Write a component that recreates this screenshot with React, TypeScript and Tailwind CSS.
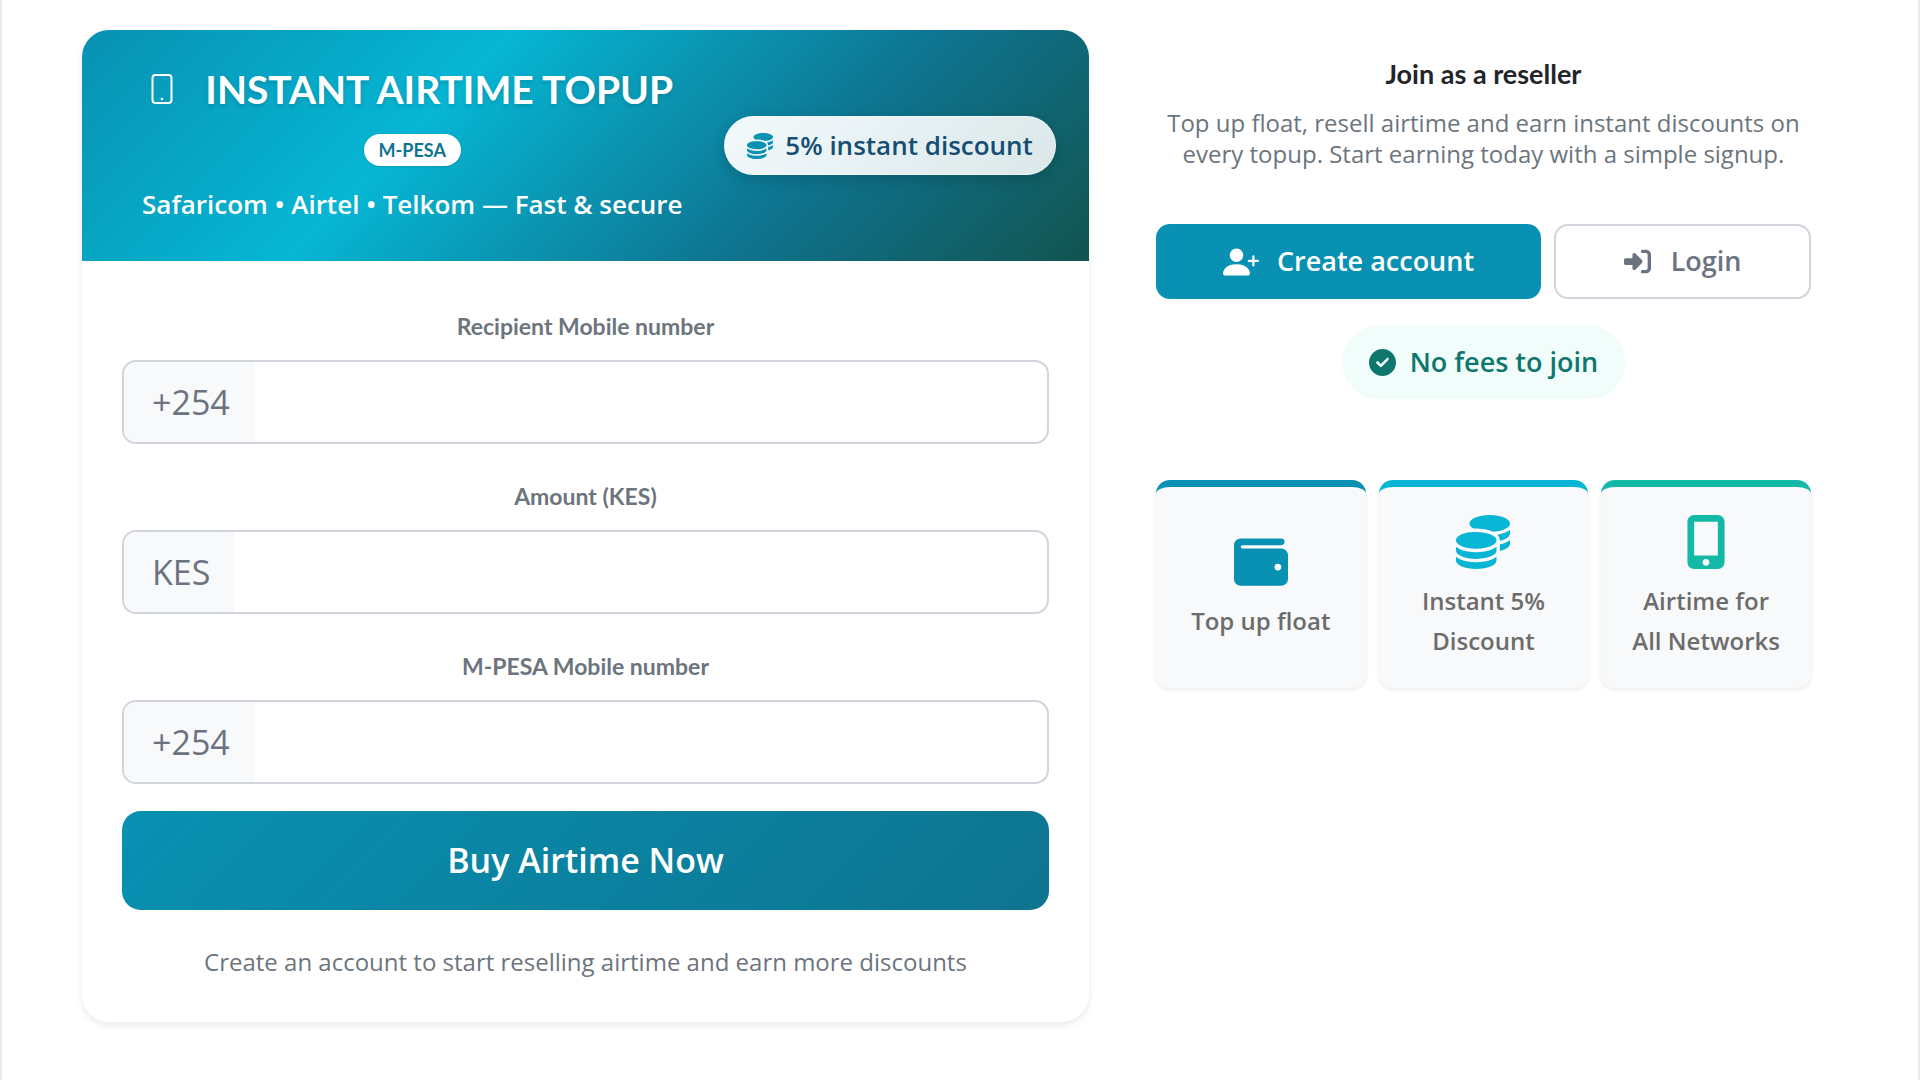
import { useId, type ReactNode } from "react";
import { BsPersonPlusFill } from "react-icons/bs";
import { FaCircleCheck, FaCoins, FaMobileScreenButton, FaRightToBracket, FaWallet } from "react-icons/fa6";

function PhoneOutline() {
  return (
    <svg viewBox="0 0 22 30" className="h-[30px] w-[22px]" fill="none" aria-hidden>
      <rect x="1.5" y="1" width="19" height="28" rx="3" stroke="currentColor" strokeWidth="2" />
      <circle cx="11" cy="25" r="1.3" fill="currentColor" />
    </svg>
  );
}

function Field({ label, prefix }: { label: string; prefix: string }) {
  const id = useId();
  return (
    <div className="flex flex-col">
      <label
        htmlFor={id}
        className="text-center font-['Lato',sans-serif] text-[23px] leading-8 font-bold text-[#6c757d]"
      >
        {label}
      </label>
      <div className="mt-[18px] flex h-[84px] overflow-hidden rounded-[14px] border-2 border-[#d1d5db] bg-white">
        <span className="flex items-center bg-[#f8f9fb] pr-6 pl-7 text-[34px] text-[#6b7280]">{prefix}</span>
        <input id={id} type="tel" className="min-w-0 flex-1 px-6 text-3xl text-gray-800 outline-none" />
      </div>
    </div>
  );
}

function Feature({ icon, className, children }: { icon: ReactNode; className: string; children: ReactNode }) {
  return (
    <li
      className={`flex h-52 flex-col items-center justify-center gap-3 rounded-[14px] border-t-[7px] bg-[#f8f9fb] text-[54px] shadow-[0_2px_4px_rgba(0,0,0,0.08)] ${className}`}
    >
      {icon}
      <span className="text-center text-2xl leading-10 font-semibold text-[#6c6c6c]">{children}</span>
    </li>
  );
}

export default function App() {
  return (
    <main className="min-h-screen border-x-2 border-[#e8e8f0] bg-white px-20 pt-[30px] font-['Open_Sans',sans-serif]">
      <div className="grid grid-cols-[71fr_50fr] items-start gap-10">
        <section className="overflow-hidden rounded-[27px] bg-white shadow-[0_3px_7px_rgba(0,0,0,0.09)]">
          <header className="flex h-[231px] items-center justify-between bg-[linear-gradient(135deg,#0891b2_0%,#06b6d4_35%,#0e7490_70%,#125450_100%)] pr-[33px] pl-[60px] text-white">
            <div className="flex flex-col items-center pb-[3px]">
              <h1 className="flex items-center gap-8 font-['Lato',sans-serif] text-[39px] leading-[48px] font-bold [text-shadow:0_2px_4px_rgba(0,0,0,0.15)]">
                <PhoneOutline />
                INSTANT AIRTIME TOPUP
              </h1>
              <span className="mt-[21px] rounded-full bg-white px-[15px] font-['Lato',sans-serif] text-lg leading-8 font-bold text-[#0e7490] shadow-sm">
                M-PESA
              </span>
              <p className="mt-[18px] text-[26px] leading-10 font-semibold">
                Safaricom • Airtel • Telkom — Fast &amp; secure
              </p>
            </div>
            <div className="flex h-[59px] items-center gap-3 rounded-full border border-white/50 bg-[linear-gradient(135deg,rgba(255,255,255,0.95),rgba(255,255,255,0.85))] px-[22px] text-[26px] font-semibold text-[#164e73] shadow-[0_5px_14px_rgba(0,0,0,0.15)]">
              <FaCoins className="text-[#0891b2]" aria-hidden />
              5% instant discount
            </div>
          </header>
          <form className="flex flex-col px-10 pt-[49px] pb-10">
            <div className="flex flex-col gap-9">
              <Field label="Recipient Mobile number" prefix="+254" />
              <Field label="Amount (KES)" prefix="KES" />
              <Field label="M-PESA Mobile number" prefix="+254" />
            </div>
            <button
              type="button"
              className="mt-[27px] h-[99px] rounded-[19px] bg-[linear-gradient(135deg,#0891b2,#0e7490)] text-[34px] font-semibold text-white"
            >
              Buy Airtime Now
            </button>
            <p className="mt-8 text-center text-2xl leading-10 text-[#6c757d]">
              Create an account to start reselling airtime and earn more discounts
            </p>
          </form>
        </section>

        <aside className="px-[27px] pt-7">
          <h2 className="text-center font-['Lato',sans-serif] text-[27px] leading-8 font-bold text-[#212529]">
            Join as a reseller
          </h2>
          <p className="mt-[17px] text-center text-2xl leading-[31px] text-[#6c757d]">
            Top up float, resell airtime and earn instant discounts on every topup. Start earning today with a simple
            signup.
          </p>
          <div className="mt-[55px] grid grid-cols-[3fr_2fr] gap-[13px]">
            <button
              type="button"
              className="flex h-[75px] items-center justify-center gap-[18px] rounded-[14px] bg-[#0891b2] text-[27px] font-semibold text-white"
            >
              <BsPersonPlusFill className="size-9" aria-hidden />
              Create account
            </button>
            <button
              type="button"
              className="flex h-[75px] items-center justify-center gap-5 rounded-[14px] border-2 border-[#d1d5db] text-[27px] font-semibold text-[#6b7280]"
            >
              <FaRightToBracket aria-hidden />
              Login
            </button>
          </div>
          <p className="mx-auto mt-[27px] flex h-[73px] w-fit items-center gap-3.5 rounded-full bg-[#f0fdfa] px-[27px] text-[27px] font-semibold text-[#0f766e]">
            <FaCircleCheck aria-hidden />
            No fees to join
          </p>
          <ul className="mt-[81px] grid grid-cols-3 gap-[13px]">
            <Feature icon={<FaWallet className="text-[#0891b2]" aria-hidden />} className="border-[#0891b2]">
              Top up float
            </Feature>
            <Feature icon={<FaCoins className="text-[#06b6d4]" aria-hidden />} className="border-[#06b6d4]">
              Instant 5%
              <br />
              Discount
            </Feature>
            <Feature icon={<FaMobileScreenButton className="text-[#14b8a6]" aria-hidden />} className="border-[#14b8a6]">
              Airtime for
              <br />
              All Networks
            </Feature>
          </ul>
        </aside>
      </div>
    </main>
  );
}
